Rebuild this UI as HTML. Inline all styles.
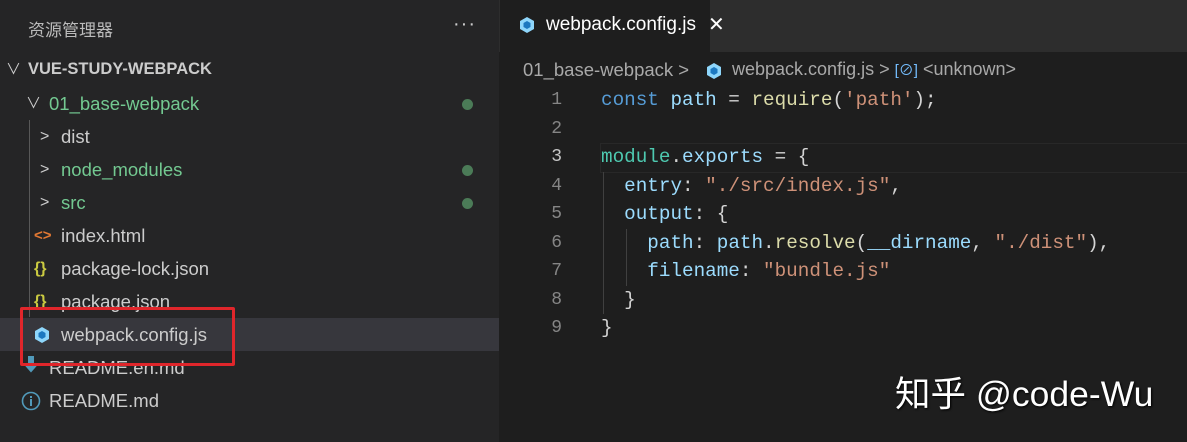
<!DOCTYPE html><html><head><meta charset="utf-8"><style>
body{margin:0;width:1187px;height:442px;overflow:hidden;background:#1e1e1e;position:relative;font-family:"Liberation Sans","Noto Sans CJK SC",sans-serif}
.a{position:absolute;white-space:pre}
#side{position:absolute;left:0;top:0;width:499px;height:442px;background:#252526}
.r{position:absolute;left:0;width:499px;height:33px;line-height:33px;font-size:18.5px;color:#cccccc}
.g{color:#73c991}
.dot{position:absolute;left:462px;top:12px;width:11px;height:11px;border-radius:50%;background:#4b7b57}
.code{position:absolute;font-family:"Liberation Mono",monospace;font-size:19.3px;line-height:28.5px;white-space:pre;color:#d4d4d4}
.ln{position:absolute;left:520px;width:42px;text-align:right;font-family:"Liberation Mono",monospace;font-size:18px;line-height:28.5px;color:#858585}
.k{color:#569cd6}.v{color:#9cdcfe}.f{color:#dcdcaa}.s{color:#ce9178}.m{color:#4ec9b0}
</style></head><body>
<div id="side">
<div class="a" style="left:28px;top:16px;font-size:17px;color:#bbbbbb">资源管理器</div>
<div class="a" style="left:453px;top:13px;font-size:20px;color:#cccccc;letter-spacing:1px">···</div>
<div class="r" style="top:53px"><span class="a" style="left:6px;font-size:15px">∨</span><span class="a" style="left:28px;font-weight:bold;font-size:16.5px">VUE-STUDY-WEBPACK</span></div>
<div class="r g" style="top:87px"><span class="a" style="left:26px;font-size:15px;color:#ccc">∨</span><span class="a" style="left:49px">01_base-webpack</span><div class="dot"></div></div>
<div style="position:absolute;left:29px;top:120px;width:1px;height:197px;background:#585858"></div>
<div class="r" style="top:120px"><span class="a" style="left:40px;font-size:16px">&gt;</span><span class="a" style="left:61px">dist</span></div>
<div class="r g" style="top:153px"><span class="a" style="left:40px;font-size:16px;color:#ccc">&gt;</span><span class="a" style="left:61px">node_modules</span><div class="dot"></div></div>
<div class="r g" style="top:186px"><span class="a" style="left:40px;font-size:16px;color:#ccc">&gt;</span><span class="a" style="left:61px">src</span><div class="dot"></div></div>
<div class="r" style="top:219px"><span class="a" style="left:34px;font-size:15px;color:#e37933;font-weight:bold">&lt;&gt;</span><span class="a" style="left:61px">index.html</span></div>
<div class="r" style="top:252px"><span class="a" style="left:34px;font-size:16px;color:#cbcb41;font-weight:bold">{}</span><span class="a" style="left:61px">package-lock.json</span></div>
<div class="r" style="top:285px"><span class="a" style="left:34px;font-size:16px;color:#cbcb41;font-weight:bold">{}</span><span class="a" style="left:61px">package.json</span></div>
<div class="r" style="top:318px;background:#37373d"><svg class="a" style="left:33px;top:8px" width="18" height="18" viewBox="0 0 18 18"><polygon points="9,1 16,5 16,13 9,17 2,13 2,5" fill="#8ed6fb"/><polygon points="9,5 12.5,7 12.5,11 9,13 5.5,11 5.5,7" fill="#1c78c0"/></svg><span class="a" style="left:61px">webpack.config.js</span></div>
<div class="r" style="top:351px"><span class="a" style="left:22px;top:-2px;color:#519aba;font-size:18px">⬇</span><span class="a" style="left:49px">README.en.md</span></div>
<div class="r" style="top:384px"><svg class="a" style="left:21px;top:7px" width="20" height="20"><circle cx="10" cy="10" r="8.5" fill="none" stroke="#519aba" stroke-width="1.6"/><rect x="9" y="8" width="2" height="7" fill="#519aba"/><rect x="9" y="5" width="2" height="2" fill="#519aba"/></svg><span class="a" style="left:49px">README.md</span></div>
<div style="position:absolute;left:20px;top:307px;width:209px;height:53px;border:3px solid #e0262b;border-radius:2px"></div>
</div>
<div style="position:absolute;left:499px;top:0;width:688px;height:52px;background:#2d2d2d"></div>
<div style="position:absolute;left:500px;top:0;width:210px;height:52px;background:#1e1e1e"></div>
<svg class="a" style="left:518px;top:16px" width="18" height="18" viewBox="0 0 18 18"><polygon points="9,1 16,5 16,13 9,17 2,13 2,5" fill="#8ed6fb"/><polygon points="9,5 12.5,7 12.5,11 9,13 5.5,11 5.5,7" fill="#1c78c0"/></svg>
<div class="a" style="left:546px;top:14px;font-size:19px;color:#ffffff">webpack.config.js</div>
<div class="a" style="left:708px;top:12px;font-size:20px;color:#ffffff">✕</div>
<div class="a" style="left:523px;top:59px;font-size:18.5px;color:#a9a9a9">01_base-webpack &gt;</div>
<svg class="a" style="left:705px;top:62px" width="18" height="18" viewBox="0 0 18 18"><polygon points="9,1 16,5 16,13 9,17 2,13 2,5" fill="#8ed6fb"/><polygon points="9,5 12.5,7 12.5,11 9,13 5.5,11 5.5,7" fill="#1c78c0"/></svg>
<div class="a" style="left:732px;top:59px;font-size:18px;color:#a9a9a9">webpack.config.js &gt; <span style="color:#75beff;font-size:15px">[⊘]</span> &lt;unknown&gt;</div>
<div style="position:absolute;left:600px;top:143px;width:587px;height:28px;border:1px solid #282828;background:#1e1e1e"></div>
<div style="position:absolute;left:603px;top:172px;width:1px;height:142px;background:#404040"></div>
<div style="position:absolute;left:626px;top:229px;width:1px;height:57px;background:#404040"></div>
<div class="ln" style="top:86px">1<br>2<br><span style="color:#c6c6c6">3</span><br>4<br>5<br>6<br>7<br>8<br>9</div>
<div class="code" style="left:601px;top:86px"><span class="k">const</span> <span class="v">path</span> = <span class="f">require</span>(<span class="s">'path'</span>);

<span class="m">module</span>.<span class="v">exports</span> = {
  <span class="v">entry</span>: <span class="s">"./src/index.js"</span>,
  <span class="v">output</span>: {
    <span class="v">path</span>: <span class="v">path</span>.<span class="f">resolve</span>(<span class="v">__dirname</span>, <span class="s">"./dist"</span>),
    <span class="v">filename</span>: <span class="s">"bundle.js"</span>
  }
}</div>
<div class="a" style="left:895px;top:366px;font-size:35.5px;color:#ffffff;text-shadow:1px 1px 2px #000">知乎 @code-Wu</div>
</body></html>
